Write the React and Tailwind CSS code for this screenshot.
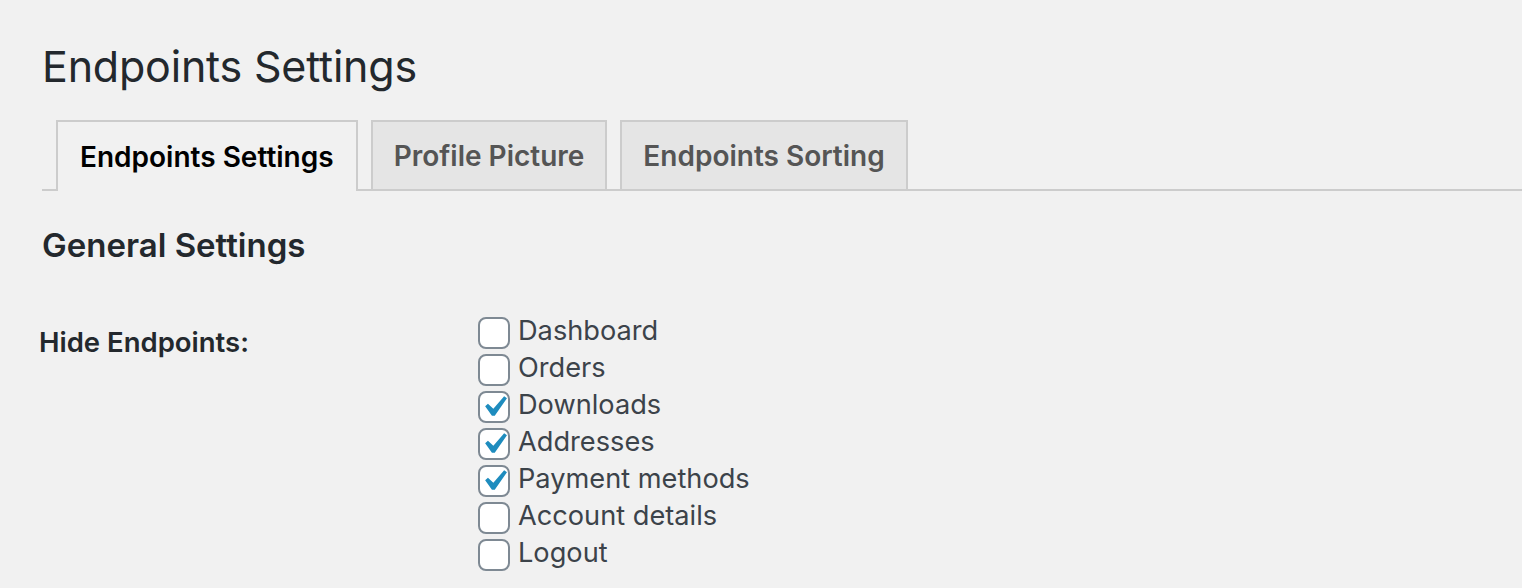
import React from 'react';

const items = [
  { label: 'Dashboard', checked: false },
  { label: 'Orders', checked: false },
  { label: 'Downloads', checked: true },
  { label: 'Addresses', checked: true },
  { label: 'Payment methods', checked: true },
  { label: 'Account details', checked: false },
  { label: 'Logout', checked: false },
];

function Checkbox({ checked }) {
  return (
    <span className="relative inline-block w-[32px] h-[32px] shrink-0 rounded-[8px] border-2 border-[#7e8993] bg-white">
      {checked && (
        <svg viewBox="0 0 20 20" className="absolute left-[-7px] top-[-7px] w-[42px] h-[42px]">
          <path d="M14.83 4.89l1.34.94-5.81 8.38H9.02L5.78 9.67l1.34-1.25 2.57 2.4z" fill="#1e8cbe" />
        </svg>
      )}
    </span>
  );
}

export default function App() {
  const font = { fontFamily: 'Inter, "Noto Sans", sans-serif' };
  return (
    <div className="min-h-[588px] w-[1522px] bg-[#f1f1f1] text-[#23282d] overflow-hidden" style={font}>
      <div className="pt-[36px] pl-[42px]">
        <h1 className="text-[43px] leading-[60px] font-normal tracking-[-0.2px]">Endpoints Settings</h1>

        <div className="mt-[24px] flex items-end gap-[13px] pl-[14px] border-b-2 border-[#ccc] h-[71px]">
          <div className="h-[71px] -mb-[2px] px-[22px] flex items-center border-2 border-b-0 border-[#ccc] bg-[#f1f1f1] text-[28px] font-semibold text-black">
            Endpoints Settings
          </div>
          <div className="h-[69px] px-[21px] flex items-center border-2 border-b-0 border-[#ccc] bg-[#e5e5e5] text-[28px] font-semibold text-[#555]">
            Profile Picture
          </div>
          <div className="h-[69px] px-[21px] flex items-center border-2 border-b-0 border-[#ccc] bg-[#e5e5e5] text-[28px] font-semibold text-[#555]">
            Endpoints Sorting
          </div>
        </div>

        <h2 className="mt-[34px] text-[33px] leading-[40px] font-semibold">General Settings</h2>

        <div className="mt-[52px] flex">
          <div className="w-[439px] -ml-[3px] pt-[7px] text-[27.5px] font-semibold leading-[36px]">Hide Endpoints:</div>
          <div className="flex flex-col">
            {items.map((it) => (
              <label key={it.label} className="h-[37px] flex items-start gap-[8px]">
                <Checkbox checked={it.checked} />
                <span className="text-[27.2px] leading-[32px] text-[#3c434a] -mt-[2px]">{it.label}</span>
              </label>
            ))}
          </div>
        </div>
      </div>
    </div>
  );
}
